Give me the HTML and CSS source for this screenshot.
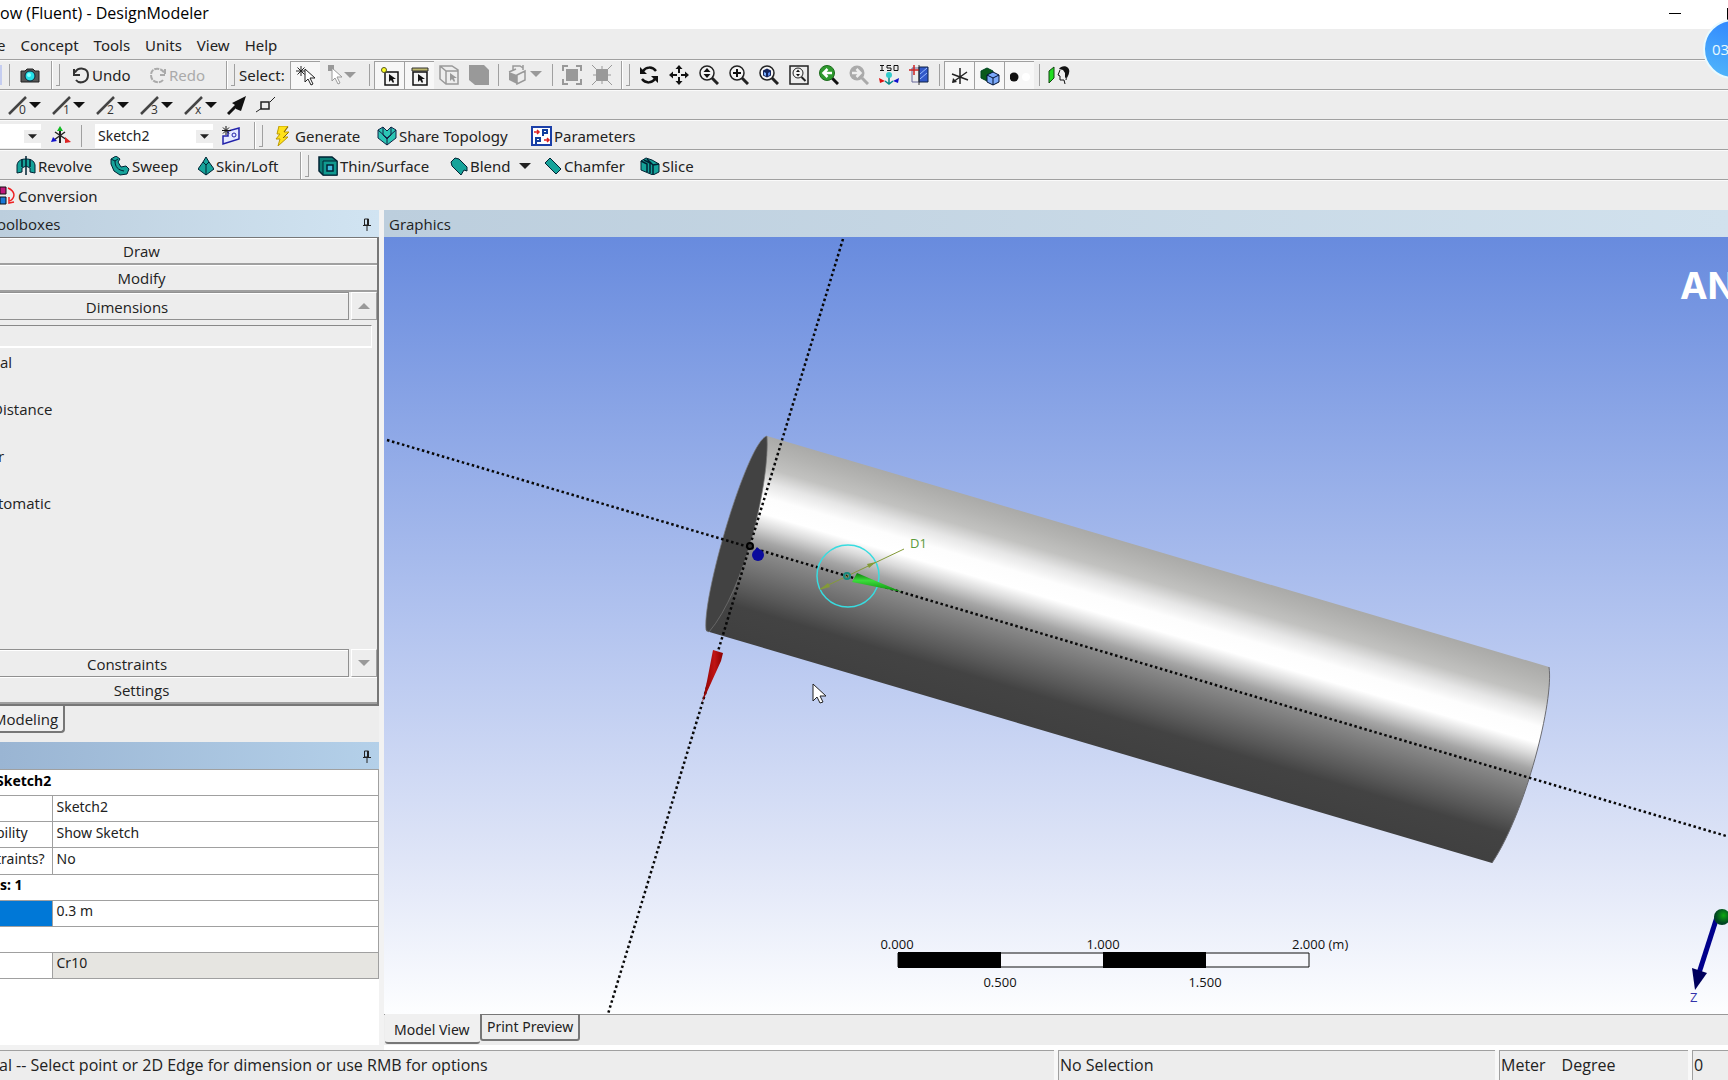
FILE: index.html
```html
<!DOCTYPE html>
<html lang="en">
<head>
<meta charset="utf-8">
<title>DesignModeler</title>
<link rel="stylesheet" href="styles.css">
</head>
<body>
<svg class="defs" aria-hidden="true">
  <symbol id="lens" viewBox="0 0 20 20"><path d="M13 13l6 6" stroke="currentColor" stroke-width="3"/><circle cx="8" cy="8" r="7" fill="#f4f4f4" stroke="currentColor" stroke-width="1.5"/></symbol>
  <symbol id="caret" viewBox="0 0 12 6"><path d="M0 0h12l-6 6z" fill="currentColor"/></symbol>
  <symbol id="edge" viewBox="0 0 20 20"><path d="M1 18L18 1" stroke="#444" stroke-width="2.5"/></symbol>
  <symbol id="arrow" viewBox="0 0 12 18"><path d="M1 1v13l3-3 3 6 2-1-3-6h5z" fill="#fff" stroke="currentColor"/></symbol>
  <symbol id="pin" viewBox="0 0 8 13"><path d="M1.500 1h4v6h-4zM0 7.500h8M4 8v5" fill="none" stroke="#222"/><path d="M5 1v6" stroke="#222" stroke-width="2"/></symbol>
</svg>

<div class="app">
  <header class="titlebar">
    <h1>ow (Fluent) - DesignModeler</h1>
    <div class="window-buttons">
      <button aria-label="Minimize"><svg width="12" height="12"><path d="M0 5.500h12" stroke="#000"/></svg></button>
      <button aria-label="Maximize"><svg width="12" height="12"><rect x=".5" y=".5" width="11" height="11" fill="none" stroke="#000"/></svg></button>
    </div>
  </header>

  <nav class="menubar">
    <button class="m-first">e</button><button>Concept</button><button>Tools</button><button>Units</button><button>View</button><button>Help</button>
  </nav>

  <div class="bar">
    <span class="blue-edge"></span><i class="sep"></i>
    <button class="ib wide-camera" aria-label="Image capture"><svg width="20" height="15"><path d="M1 3h4l2-2h6l2 2h4v11H1z" fill="#555" stroke="#222"/><circle cx="10" cy="8" r="5" fill="#25e0e8" stroke="#123"/><circle cx="9" cy="7" r="2" fill="#8ff"/></svg></button>
    <i class="end"></i><i class="grip"></i>
    <button class="tb w78 undo"><svg width="18" height="18"><path d="M3 6.500C6 1 16 1 16 9s-9 9-12 5M2 3v6h6" fill="none" stroke="#333" stroke-width="2"/></svg>Undo</button>
    <button class="tb w78 off"><svg width="18" height="18"><path d="M15 6.500C12 1 2 1 2 9s9 9 12 5M16 3v6h-6" fill="none" stroke="#aaa" stroke-width="2" stroke-dasharray="5 1"/></svg>Redo</button>
    <i class="end"></i><i class="grip"></i>
    <span class="select-label">Select:</span>
    <button class="ib on" aria-label="New selection"><svg width="22" height="20"><path d="M6 0v10M1 5h10M2.500 1.500l7 7M9.500 1.500l-7 7" stroke="#222"/><use href="#arrow" x="9" y="2" width="12" height="18"/></svg></button>
    <button class="ib cursor-mode dim" aria-label="Select mode"><svg width="28" height="20"><path d="M0 0h6v6H0z" fill="#999"/><use href="#arrow" x="3" y="2" width="12" height="18"/><use href="#caret" x="16" y="7" width="12" height="6"/></svg></button>
    <i class="sep"></i>
    <button class="ib on" aria-label="Points"><svg width="20" height="20"><path d="M5 6h13v13H5z" fill="#f4f4f4" stroke="#111" stroke-width="1.500"/><circle cx="4" cy="4" r="2.500" fill="#ff2" stroke="#552"/><path d="M9 8v8l2-2 2 3 1-1-1-3h3z" fill="#111"/></svg></button>
    <button class="ib on" aria-label="Edges"><svg width="20" height="20"><path d="M3 6h14v13H3z" fill="#f4f4f4" stroke="#111" stroke-width="1.500"/><path d="M2 2h16v3H2z" fill="#bdb76b" stroke="#333"/><path d="M8 8v8l2-2 2 3 1-1-1-3h3z" fill="#111"/></svg></button>
    <button class="ib dim" aria-label="Faces"><svg width="20" height="20"><path d="M1 1h12l6 4v14H7l-6-5zM1 1l6 5h12M7 6v13" fill="none" stroke="#999" stroke-width="1.500"/><path d="M11 8v8l2-2 2 3 1-1-1-3h3z" fill="#999"/></svg></button>
    <button class="ib dim" aria-label="Bodies"><svg width="20" height="20"><path d="M0 0h15l5 5v15H6l-6-5z" fill="#999"/></svg></button>
    <i class="sep tight"></i>
    <button class="ib cube-drop dim" aria-label="Extend selection"><svg width="34" height="20"><path d="M1 7l8 3v9l-8-4z" fill="#999"/><path d="M9 10l8-4v9l-8 4zM1 7l7-3M5 5V1h7l3 2M15 0v5" fill="none" stroke="#999" stroke-width="1.500"/><use href="#caret" x="22" y="6" width="12" height="6"/></svg></button>
    <i class="sep"></i>
    <button class="ib dim" aria-label="Expand"><svg width="20" height="20"><path d="M4 4h12v12H4z" fill="#999"/><path d="M1 6V1h5M14 1h5v5M19 14v5h-5M6 19H1v-5" fill="none" stroke="#999" stroke-width="2"/></svg></button>
    <button class="ib dim" aria-label="Collapse"><svg width="20" height="20"><path d="M4 4h12v12H4z" fill="#999"/><path d="M0 0l20 20M20 0L0 20M10 1v18M1 10h18" stroke="#999"/></svg></button>
    <i class="end after-select"></i><i class="grip"></i>
    <button class="ib" aria-label="Rotate"><svg width="20" height="20"><path d="M17 6C13 1 7 2 4 6M3 14c4 5 10 4 13 0" fill="none" stroke="#111" stroke-width="2.500"/><path d="M1 2v7h7zM19 18v-7h-7z" fill="#111"/></svg></button>
    <button class="ib" aria-label="Pan"><svg width="20" height="20"><path d="M10 3v5M10 12v5M3 10h5M12 10h5" stroke="#111" stroke-width="2"/><path d="M6.500 4L10 0l3.500 4zM6.500 16l3.500 4 3.500-4zM4 6.500L0 10l4 3.500zM16 6.500l4 3.500-4 3.500z" fill="#111"/></svg></button>
    <button class="ib" aria-label="Zoom"><svg width="20" height="20"><use href="#lens"/><path d="M8 3l3.500 4h-7zM8 13L4.500 9h7z" fill="#111"/></svg></button>
    <button class="ib" aria-label="Box zoom"><svg width="20" height="20"><use href="#lens"/><path d="M8 4v8M4 8h8" stroke="#111" stroke-width="2"/></svg></button>
    <button class="ib" aria-label="Zoom to fit"><svg width="20" height="20"><use href="#lens"/><path d="M8 3.500l4 2v5l-4 2-4-2v-5z" fill="#12235c"/><path d="M5 7l2 1v3l-2-1z" fill="#7ab0ff"/><path d="M11 7l-2 1v3l2-1z" fill="#5c8ae8"/></svg></button>
    <button class="ib" aria-label="Magnifier window"><svg width="20" height="20"><path d="M1 1h18v18H1z" fill="none" stroke="#222" stroke-width="1.500"/><circle cx="9" cy="8" r="5" fill="#f4f4f4" stroke="#222"/><path d="M12.500 12l4 4" stroke="#222" stroke-width="2"/><path d="M9 4.500l2 2.500H7zM9 11.500L7 9h4z" fill="#111"/></svg></button>
    <button class="ib" aria-label="Previous view"><svg width="20" height="20"><path d="M13 13l6 6" stroke="#111" stroke-width="3"/><circle cx="8" cy="8" r="7.500" fill="#2f9a2f" stroke="#1c6b1c"/><path d="M13 8H5M8.500 4L4.500 8l4 4" fill="none" stroke="#fff" stroke-width="2.500"/></svg></button>
    <button class="ib" aria-label="Next view"><svg width="20" height="20"><path d="M13 13l6 6" stroke="#aaa" stroke-width="3"/><circle cx="8" cy="8" r="7.500" fill="#aaa"/><path d="M3 8h8M7.500 4l4 4-4 4" fill="none" stroke="#eee" stroke-width="2.500"/></svg></button>
    <button class="ib" aria-label="Isometric view"><svg width="20" height="20"><path d="M1 .500h4M3 0v6M1 5.500h4M12 .500H8v2.500h4v2.500H8M15 .500h4v5h-4z" fill="none" stroke="#111"/><path d="M10 12v6M6 16l4 3 4-3" stroke="#088" stroke-width="1.500" fill="none"/><circle cx="10" cy="10" r="3" fill="#3cc"/><path d="M0 13l1 5 5-2z" fill="#d11"/><path d="M20 13l-1 5-5-2z" fill="#11c"/></svg></button>
    <button class="ib" aria-label="Look at plane"><svg width="20" height="20"><path d="M3 3h8v14H3z" fill="none" stroke="#669"/><path d="M10 2h9v15h-9z" fill="#3158c8" stroke="#124"/><path d="M11 9l7-6M11 14l7-6" stroke="#9bf"/><path d="M0 5h10M5 0v10" stroke="#c22" stroke-width="1.500"/><path d="M10 0v20" stroke="#333"/></svg></button>
    <i class="sep"></i>
    <button class="ib on" aria-label="Display axes"><svg width="20" height="20"><path d="M10 2v16M2 8l16 6M3 16L17 6" stroke="#222" stroke-width="1.500"/><path d="M2 17l1-5 4 4z" fill="#222"/></svg></button>
    <button class="ib on" aria-label="Display model"><svg width="20" height="20"><path d="M1 5l6-3 6 3v7l-6 3-6-3z" fill="#0a5a1a" stroke="#042"/><path d="M7 9l6-3 6 3v7l-6 3-6-3z" fill="#7aa8f8" stroke="#013"/><path d="M7 9l6 3 6-3M13 12v7" fill="none" stroke="#013"/></svg></button>
    <button class="ib on" aria-label="Display points"><svg width="20" height="20"><circle cx="4" cy="11" r="4.500" fill="#111"/><circle cx="16" cy="11" r="4" fill="#fff"/></svg></button>
    <i class="sep"></i>
    <button class="ib" aria-label="Look at face"><svg width="22" height="20"><path d="M1 6l5-4v11l-5 5z" fill="#2d2" stroke="#141"/><path d="M12 5l-2 5 2 1v4h4l1 4M20 8c0 4-2 4-2 7" fill="none" stroke="#111"/><path d="M11 4c3-5 12-3 10 4-1 3-2 4-4 5V8l-2-3z" fill="#111"/></svg></button>
  </div>

  <div class="bar edges">
    <button class="eb" aria-label="Edge option 0"><svg width="34" height="20"><use href="#edge" width="20" height="20"/><text x="11" y="18">0</text><use href="#caret" x="21" y="6" width="12" height="6"/></svg></button>
    <button class="eb" aria-label="Edge option 1"><svg width="34" height="20"><use href="#edge" width="20" height="20"/><text x="11" y="18">1</text><use href="#caret" x="21" y="6" width="12" height="6"/></svg></button>
    <button class="eb" aria-label="Edge option 2"><svg width="34" height="20"><use href="#edge" width="20" height="20"/><text x="11" y="18">2</text><use href="#caret" x="21" y="6" width="12" height="6"/></svg></button>
    <button class="eb" aria-label="Edge option 3"><svg width="34" height="20"><use href="#edge" width="20" height="20"/><text x="11" y="18">3</text><use href="#caret" x="21" y="6" width="12" height="6"/></svg></button>
    <button class="eb" aria-label="Edge option x"><svg width="34" height="20"><use href="#edge" width="20" height="20"/><text x="11" y="18">x</text><use href="#caret" x="21" y="6" width="12" height="6"/></svg></button>
    <button class="ib direction" aria-label="Edge direction"><svg width="20" height="20"><path d="M1 18l9-9" stroke="#111" stroke-width="3"/><path d="M19 0L5 7l3 2 1 4 5 2z" fill="#111"/></svg></button>
    <button class="ib" aria-label="Vertices"><svg width="20" height="20"><path d="M0 16l6-4M14 6l5-5" stroke="#222"/><path d="M5 6h8v7H5z" fill="none" stroke="#222" stroke-width="1.500"/></svg></button>
  </div>

  <div class="bar low">
    <div class="combo plane"><select aria-label="Plane"><option></option></select><svg width="9" height="5"><use href="#caret"/></svg></div>
    <button class="ib" aria-label="New plane"><svg width="20" height="20"><path d="M9 3v14" stroke="#222" stroke-width="2"/><path d="M4 6l12 8M14 6L3 14" stroke="#222" stroke-width="1.500"/><path d="M6 5l3-5 3 5z" fill="#1b2"/><path d="M14 11l6 5-6 1z" fill="#d22"/><path d="M0 16l2-5 4 4z" fill="#11c"/></svg></button>
    <i class="sep after-plane"></i>
    <div class="combo sketch"><select aria-label="Sketch"><option>Sketch2</option></select><svg width="9" height="5"><use href="#caret"/></svg></div>
    <button class="ib new-sketch" aria-label="New sketch"><svg width="20" height="20"><path d="M2 10h5V5l11-3v11L2 18z" fill="#e4e8ff" stroke="#22a" stroke-width="1.500"/><circle cx="13" cy="9" r="2" fill="none" stroke="#22a"/><path d="M5 0v9M1 4.500h9M2 1.500l6 6M8 1.500l-6 6" stroke="#111"/></svg></button>
    <i class="end"></i><i class="grip"></i>
    <button class="tb w102 gen"><svg width="16" height="20"><path d="M4 0h9l-4 6h5l-5 5h4L3 20l2-7H1l4-5H2z" fill="#ffe21a" stroke="#b90"/><path d="M13 1L9 6M13 7l-5 5" stroke="#860"/></svg>Generate</button>
    <button class="tb w154"><svg width="20" height="20"><path d="M1 4l5-3 4 4 4-4 5 3v8l-9 7-9-7z" fill="#2cc5b5" stroke="#124"/><path d="M6 1v8l4 4 4-4V1M1 4l9 8 9-8M10 12v7" fill="none" stroke="#124"/></svg>Share Topology</button>
    <button class="tb"><svg width="21" height="20"><path d="M1 1h19v18H1z" fill="#fff" stroke="#1b3fa8" stroke-width="2"/><path d="M3 6h5M6 4l2 2-2 2M13 14h5M16 12l2 2-2 2" fill="none" stroke="#d22" stroke-width="1.500"/><path d="M12 10V4h4v3h-4M5 18v-6h4v3H5" fill="none" stroke="#123f9e" stroke-width="2"/></svg>Parameters</button>
  </div>

  <div class="bar low">
    <button class="tb w94 revolve"><svg width="20" height="20"><path d="M1 17v-8c1-5 5-6 9-6s8 1 9 6v8l-5-1v-4l-4-2-4 2v4z" fill="#16a39a" stroke="#023"/><path d="M10 0v19M6 3v8M14 3v8" stroke="#023" stroke-width="1.500"/></svg>Revolve</button>
    <button class="tb w88"><svg width="20" height="20"><path d="M1 3l5-3 4 3-2 3 3 5 5-1 3 3-2 5-7 1-6-4-3-7z" fill="#16a39a" stroke="#023"/><path d="M1 3l4 2 3-2M5 5c0 6 3 9 9 10" fill="none" stroke="#023"/></svg>Sweep</button>
    <button class="tb w102"><svg width="16" height="20"><path d="M8 1l3 5 5 7-8 6-8-6 5-7z" fill="#16a39a" stroke="#023"/><path d="M5 6l3 3 3-3M8 9v10" fill="none" stroke="#023"/></svg>Skin/Loft</button>
    <i class="end"></i><i class="grip"></i>
    <button class="tb w132 thin"><svg width="20" height="20"><path d="M1 1h13l5 4v14H5l-4-4z" fill="#0b8078" stroke="#023" stroke-width="1.500"/><path d="M5 5h14v14H5z" fill="#109a90" stroke="#023"/><path d="M9 9h6v6H9z" fill="#4bd" stroke="#023" stroke-width="1.500"/></svg>Thin/Surface</button>
    <button class="tb w94"><svg width="18" height="18"><path d="M1 5l4-4 4 1 8 8v4l-3-1-3 5-9-9z" fill="#16a39a" stroke="#023"/></svg>Blend<svg class="drop" width="12" height="6"><use href="#caret"/></svg></button>
    <button class="tb w96"><svg width="18" height="18"><path d="M1 6l5-5 11 11-5 5z" fill="#16a39a" stroke="#023"/></svg>Chamfer</button>
    <button class="tb"><svg width="20" height="18"><path d="M1 4l5-3 6 2 7 4v8l-6 3-12-5z" fill="#16a39a" stroke="#023"/><path d="M1 4l6 3v8M4 3l6 3v10M7 2l6 6v10M13 8l6-1" fill="none" stroke="#023" stroke-width="1.500"/></svg>Slice</button>
  </div>

  <div class="bar last">
    <button class="tb conv"><svg width="16" height="20"><path d="M0 1h6v7H0z" fill="#c0187c" stroke="#111"/><path d="M0 11h6v7H0z" fill="#1878d8" stroke="#111"/><path d="M8 2c7 3 8 9 2 13M9 11v6l5-1" fill="none" stroke="#e22" stroke-width="1.500"/></svg>Conversion</button>
  </div>

  <main class="work">
    <aside class="side">
      <div class="head toolbox-head"><h2>oolboxes</h2><svg width="8" height="13"><use href="#pin"/></svg></div>
      <div class="toolboxes">
        <button class="acc">Draw</button>
        <button class="acc">Modify</button>
        <div class="acc-row"><button class="acc">Dimensions</button><button class="scroll" aria-label="Scroll up"><svg width="12" height="6"><path d="M0 6h12L6 0z" fill="#999"/></svg></button></div>
        <div class="tools">
          <button class="sunken" aria-label="General"></button>
          <button>al</button>
          <button class="cut-d">Distance</button>
          <button class="cut-r">r</button>
          <button class="cut-t">tomatic</button>
        </div>
        <div class="acc-row"><button class="acc">Constraints</button><button class="scroll" aria-label="Scroll down"><svg width="12" height="6"><path d="M0 0h12L6 6z" fill="#999"/></svg></button></div>
        <button class="acc">Settings</button>
      </div>
      <div class="side-tabs"><button><span>Modeling</span></button></div>
      <div class="head details-head"><svg width="8" height="13"><use href="#pin"/></svg></div>
      <div class="details">
        <table>
          <colgroup><col class="key"><col></colgroup>
          <tr><th colspan="2"><span class="cut-s">Sketch2</span></th></tr>
          <tr><td></td><td>Sketch2</td></tr>
          <tr><td><span class="cut-b">bility</span></td><td>Show Sketch</td></tr>
          <tr><td><span class="cut-b">traints?</span></td><td>No</td></tr>
          <tr><th colspan="2">s: 1</th></tr>
          <tr><td class="picked"></td><td>0.3 m</td></tr>
          <tr><th colspan="2"></th></tr>
          <tr><td></td><td class="readonly">Cr10</td></tr>
        </table>
      </div>
    </aside>

    <section class="view">
      <div class="head view-head"><h2>Graphics</h2></div>
      <div class="canvas">
        <svg viewBox="384 237 1344 777" preserveAspectRatio="xMinYMin slice" role="img" aria-label="Cylinder model with sketch circle">
          <defs>
            <linearGradient id="steel" gradientUnits="userSpaceOnUse" x1="767" y1="436" x2="709" y2="632">
              <stop offset="0" stop-color="#aaaaa8"/><stop offset=".07" stop-color="#b4b4b2"/><stop offset=".15" stop-color="#c2c2c0"/><stop offset=".22" stop-color="#e6e6e6"/><stop offset=".29" stop-color="#fdfdfd"/><stop offset=".37" stop-color="#fff"/><stop offset=".43" stop-color="#dadada"/><stop offset=".5" stop-color="#a6a6a6"/><stop offset=".56" stop-color="#888"/><stop offset=".66" stop-color="#707070"/><stop offset=".76" stop-color="#585858"/><stop offset=".84" stop-color="#434343"/><stop offset="1" stop-color="#404040"/>
            </linearGradient>
            <linearGradient id="green" x1="0" y1="0" x2="0" y2="1"><stop offset="0" stop-color="#0a7a0a"/><stop offset=".4" stop-color="#3cdc3c"/><stop offset="1" stop-color="#0a8a0a"/></linearGradient>
            <linearGradient id="red"><stop offset="0" stop-color="#800"/><stop offset=".6" stop-color="#c01414"/><stop offset="1" stop-color="#800"/></linearGradient>
            <radialGradient id="ball" cx=".6" cy=".4"><stop offset="0" stop-color="#1a1"/><stop offset="1" stop-color="#042"/></radialGradient>
          </defs>
          <path d="M767 436L1549 667C1554 700 1526 812 1492 863L706 631z" fill="url(#steel)"/>
          <path d="M1549 667C1554 700 1526 812 1492 863" fill="none" stroke="#6b6b70"/>
          <path d="M767 436C770 480 745 590 709 632L706 630C702 595 748 440 767 436z" fill="#424242" stroke="#777" stroke-width=".7"/>
          <g class="dots"><path d="M387 440L1728 836.500"/><path d="M843 239L608 1014"/></g>
          <circle cx="750" cy="546" r="3" fill="#333" stroke="#000" stroke-width="2"/>
          <circle cx="758" cy="555" r="6" fill="#0a0a9c"/><path d="M755 550l2-3 4 4z" fill="#0a0a9c"/>
          <path d="M713 650l10 3-2 8-19 42 5-22z" fill="url(#red)"/>
          <g fill="none"><circle cx="848" cy="576" r="31" stroke="#38dce0" stroke-width="1.500"/><path d="M820 589L904 549" stroke="#849a38"/></g>
          <path d="M819 590l9-7 2 4zM876 562l-9 2 2 4z" fill="#849a38"/>
          <circle cx="847" cy="576" r="3" fill="none" stroke="#18897c" stroke-width="2"/>
          <path d="M857 573l-5 9 50 10z" fill="url(#green)"/>
          <text x="910" y="548" class="dim-name">D1</text>
          <g class="scale">
            <path d="M898 953h411v14H898z" fill="#f6f7fc" stroke="#111"/><path d="M898 952h103v16H898zM1103 952h103v16h-103z"/>
            <text x="897" y="949">0.000</text><text x="1103" y="949">1.000</text><text x="1292" y="949" class="start">2.000 (m)</text><text x="1000" y="987">0.500</text><text x="1205" y="987">1.500</text>
          </g>
          <path d="M1717 917l-18 56" stroke="#00008c" stroke-width="5"/><path d="M1692 968l15 5-12 17z" fill="#00005c"/>
          <circle cx="1722" cy="917" r="8" fill="url(#ball)"/>
          <text x="1690" y="1002" class="z">Z</text>
          <text x="1680" y="299" class="brand">AN</text>
          <path d="M813 684v17l4-4 3 6 3-1-3-6h6z" fill="#fff" stroke="#222"/>
        </svg>
      </div>
      <div class="view-tabs"><button class="active">Model View</button><button>Print Preview</button></div>
    </section>
  </main>

  <footer class="status">
    <span class="s-hint">al -- Select point or 2D Edge for dimension or use RMB for options</span>
    <span>No Selection</span>
    <span class="s-unit"><span>Meter</span><span>Degree</span></span>
    <span>0</span>
  </footer>
  <div class="timer">03</div>
</div>
</body>
</html>
```
FILE: styles.css
```css
* { box-sizing: border-box; }
body { margin: 0; background: #ededed; color: #222; font: 15px/20px "Noto Sans", "Open Sans", sans-serif; overflow: hidden; }
button, select { font: inherit; color: inherit; background: none; border: 0; padding: 0; margin: 0; text-align: left; white-space: nowrap; }
h1, h2 { margin: 0; font-size: 15px; font-weight: 400; font-family: "Open Sans", sans-serif; }
svg { display: block; flex: none; }
.defs { position: absolute; width: 0; height: 0; }
.app { position: relative; display: flex; flex-direction: column; min-height: 100vh; overflow: hidden; }

.titlebar { display: flex; justify-content: space-between; align-items: flex-start; height: 29px; padding-top: 3px; background: #fff; color: #000; overflow: hidden; }
.titlebar h1 { font-size: 16px; }
.window-buttons { display: flex; gap: 46px; margin-right: -11px; padding-top: 5px; }
.menubar { display: flex; gap: 15px; height: 31px; padding-top: 6px; border-bottom: 1px solid #a0a0a0; }
.menubar button { height: 20px; }
.m-first { margin-left: -3px; }

.bar { display: flex; align-items: center; height: 30px; border-top: 1px solid #fafafa; border-bottom: 1px solid #a0a0a0; overflow: hidden; }
.bar.low { padding-top: 1px; }
.bar.last { border-bottom: 0; }
.sep { flex: none; width: 1px; height: 22px; margin: 0 4px 0 5px; background: #a0a0a0; }
.sep.tight { margin: 0 4px; }
.end { flex: none; width: 1px; height: 28px; background: #a0a0a0; box-shadow: 1px 0 #fff; margin-right: 4px; }
.grip { flex: none; width: 4px; height: 22px; margin-right: 4px; border: solid #a0a0a0; border-width: 0 1px 1px 0; }
.ib { flex: none; display: flex; align-items: center; justify-content: center; width: 30px; height: 28px; color: #222; }
.on { background: #f7f7f7; border: solid #a0a0a0; border-width: 1px 0 0 1px; }
.dim { color: #999; }
.tb { display: flex; flex: none; align-items: center; gap: 2px; }
.drop { margin-left: 6px; }
.blue-edge { width: 2px; height: 20px; margin-right: 2px; background: #c5cdf0; }
.wide-camera { width: 32px; margin-right: 5px; }
.undo { margin-left: 8px; }
.w78 { width: 77px; }
.w88 { width: 88px; }
.w94 { width: 94px; }
.w96 { width: 96px; }
.w102 { width: 102px; }
.w132 { width: 132px; }
.w154 { width: 154px; }
.off { color: #aaa; }
.select-label { width: 51px; }
.cursor-mode { width: 44px; }
.cube-drop { width: 44px; }
.after-select { margin-left: 4px; }
.edges { padding: 2px 0 0 3px; }
.eb { width: 44px; padding-left: 5px; color: #111; }
.eb svg { overflow: visible; }
.eb text { font: 12px "Open Sans", sans-serif; fill: #333; }
.direction { width: 28px; }

.combo { position: relative; display: flex; align-items: center; height: 24px; background: #fff; }
.combo select { appearance: none; width: 100%; height: 24px; padding-left: 3px; font-size: 14px; }
.combo svg { position: absolute; right: 4px; top: 10px; box-shadow: 0 0 0 4px #ededed; background: #ededed; }
.plane { width: 41px; margin-right: 5px; }
.sketch { width: 118px; margin-left: 7px; }
.combo.sketch { margin-left: 9px; }
.new-sketch { margin-left: 3px; margin-right: 8px; }
.gen { margin-left: 8px; }
.gen svg { margin-right: 2px; }
.revolve { margin-left: 16px; }
.thin { margin-left: 5px; }

.work { flex: 1; display: grid; grid-template-columns: 379px 1fr; column-gap: 5px; min-height: 0; background: #f2f2f2; }
.side { display: flex; flex-direction: column; min-width: 0; overflow: hidden; font-family: "Open Sans", sans-serif; }
.head { display: flex; align-items: center; height: 27px; flex: none; padding-top: 1px; }
.head svg { margin: 0 8px 0 auto; }
.toolbox-head { background: linear-gradient(90deg, #bccedd, #d1e4f2); }
.toolbox-head h2 { margin-left: -3px; }
.details-head { background: linear-gradient(90deg, #9ab5d3, #b4d0e9); }
.toolboxes { display: flex; flex-direction: column; height: 469px; border: solid #777; border-width: 1px 2px 2px 0; background: #ededed; }
.acc { height: 27px; flex: none; text-align: center; padding-top: 1px; border: solid #a0a0a0; border-width: 0 0 2px; text-indent: -94px; box-shadow: inset 0 1px #fff; }
.acc-row { display: flex; gap: 2px; height: 28px; }
.acc-row .acc { width: 349px; border: 1px solid #909090; border-left: 0; height: 28px; }
.scroll { flex: 1; display: flex; align-items: center; justify-content: center; border: 1px solid #a0a0a0; border-color: #fff #a0a0a0 #a0a0a0 #fff; }
.tools { flex: 1; display: flex; flex-direction: column; padding-top: 5px; }
.tools button { height: 47px; padding-bottom: 21px; }
.tools .sunken { width: 372px; height: 23px; margin-bottom: 1px; padding: 0; border: solid #888; border-width: 1px 1px 2px 0; border-color: #888 #fff #fff; }
.cut-d { margin-left: -8px; }
.cut-r, .cut-t { margin-left: -2px; }
.side-tabs { display: flex; height: 36px; background: #ededed; }
.side-tabs button { width: 65px; height: 27px; border: solid #777; border-width: 0 2px 2px 0; border-radius: 0 0 4px 0; background: #f0f0f0; }
.side-tabs span { display: block; margin-left: -7px; }
.details { flex: 1; background: #fff; margin-bottom: 5px; }
table { width: 379px; height: 210px; border-collapse: collapse; table-layout: fixed; font: 14px/18px "Noto Sans", "Open Sans", sans-serif; }
.key { width: 52px; }
tr { height: 26px; }
th, td { padding: 0 0 4px; border: 1px solid #a0a0a0; border-left: 0; text-align: left; white-space: nowrap; overflow: hidden; }
th { font-weight: 700; color: #000; }
td + td { padding-left: 4px; }
.cut-s, .cut-b { margin-left: -4px; }
.picked { background: #0078d7; }
.readonly { background: #e6e5e1; }

.view { display: flex; flex-direction: column; min-width: 0; }
.view-head { padding-left: 5px; background: linear-gradient(90deg, #bccedd, #d1e1ed); }
.canvas { flex: 1; min-height: 0; overflow: hidden; background: linear-gradient(#688bde, #b3c4ef 50%, #dfe5f7 80%, #fdfeff); }
.canvas svg { width: 100%; height: 777px; }
.canvas text { font: 13px "Open Sans", sans-serif; }
.dots { stroke: #080808; stroke-width: 2.500; stroke-dasharray: 2.500 2.700; fill: none; }
.canvas .dim-name { fill: #5c9a3a; }
.scale text { text-anchor: middle; fill: #111; }
.scale .start { text-anchor: start; }
.canvas .z { fill: #33a; }
.canvas .brand { font: 700 37px Inter, sans-serif; fill: #fff; }
.view-tabs { display: flex; align-items: flex-start; height: 36px; border-bottom: 5px solid #fff; background: #ededed; box-shadow: inset 0 1px #999; }
.view-tabs button { height: 27px; width: 100px; padding: 0 0 0 5px; font-size: 14px; border: solid #777; border-width: 1px 2px 2px; border-radius: 0 0 3px 3px; }
.view-tabs .active { width: 95px; height: 30px; margin-left: 1px; padding: 4px 0 0 9px; border-width: 0 0 2px; background: #f0f0f0; }

.status { display: grid; grid-template-columns: 1054fr 437fr 189fr 36fr; gap: 4px; height: 30px; flex: none; background: #f8f8f8; font: 16px/20px "Open Sans", sans-serif; }
.status > span { min-width: 0; padding: 4px 1px 0; background: #ededed; border: solid #a0a0a0; border-width: 1px 0 0 1px; white-space: nowrap; overflow: hidden; }
.status .s-hint { border-left: 0; text-indent: -2px; }
.status .s-unit { display: flex; gap: 16px; }
.timer { position: absolute; right: -35px; top: 19px; width: 60px; height: 60px; padding: 18px 0 0 7px; border: 2px solid #e8faff; border-radius: 50%; background: linear-gradient(200deg, #2b80ff, #52b8fa); color: #e8faff; font-family: "Open Sans", sans-serif; }
```
